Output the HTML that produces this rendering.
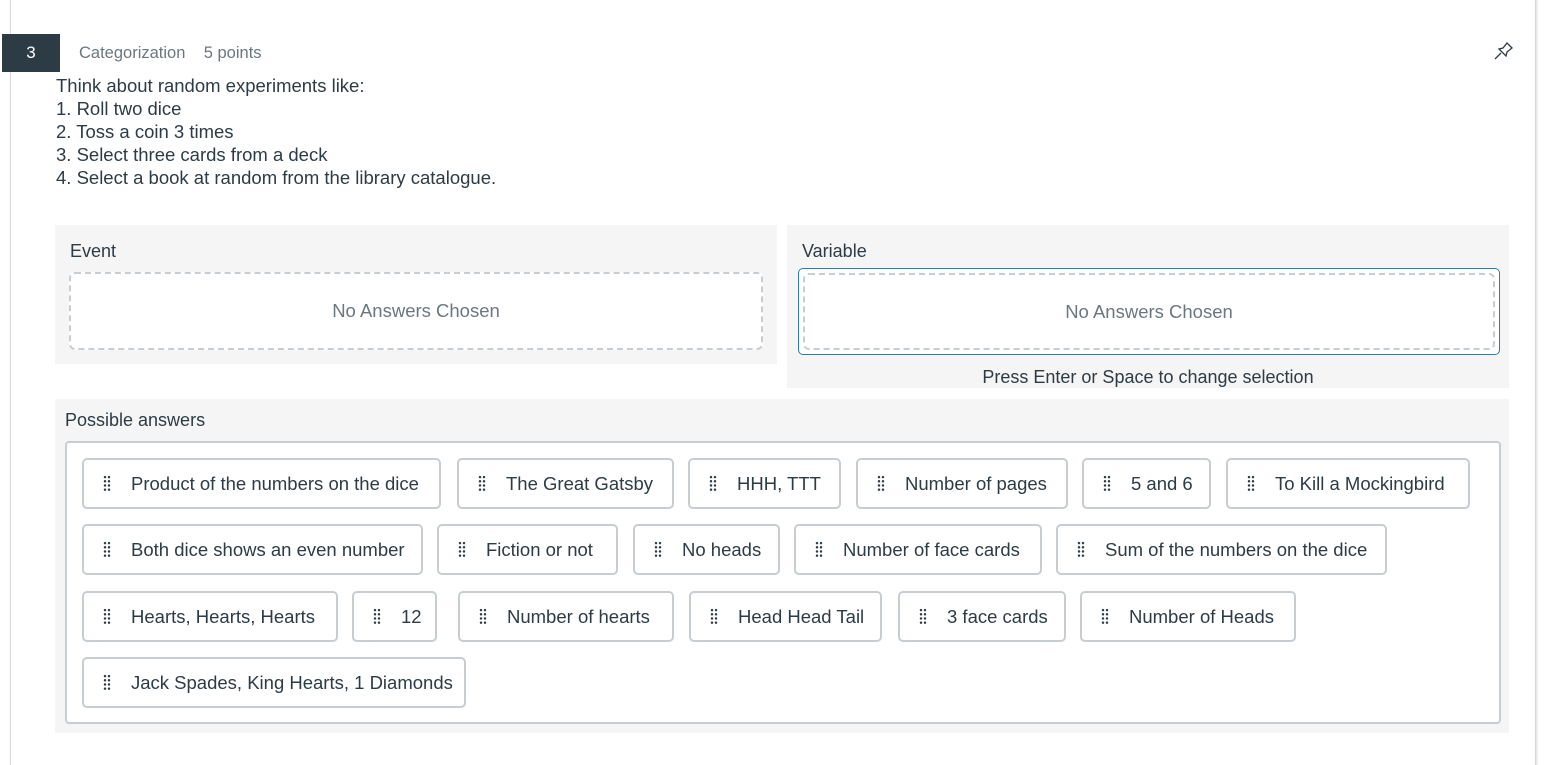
<!DOCTYPE html>
<html><head><style>
*{box-sizing:border-box;margin:0;padding:0}
html,body{width:1561px;height:765px;overflow:hidden}
body{background:#fff;font-family:"Liberation Sans",sans-serif;color:#2d3b45;position:relative}
.card{position:absolute;left:10px;top:-5px;width:1526px;height:800px;border:1px solid #d5d9dc;border-radius:6px;box-shadow:1px 0 2px #ddd}
.badge{position:absolute;left:2px;top:34px;width:58px;height:38px;background:#2d3b45;color:#fff;font-size:17px;line-height:38px;text-align:center}
.meta{position:absolute;left:79px;top:44px;font-size:16.5px;color:#6b7780}
.q{position:absolute;left:56px;top:74px;font-size:18.5px;line-height:23px;color:#2d3b45}
.panel{position:absolute;background:#f5f5f5}
.lbl{position:absolute;font-size:18px}
.drop{position:absolute;border:2px dashed #c7cdd1;border-radius:6px;background:#fff;color:#6b7780;font-size:18.5px;display:flex;align-items:center;justify-content:center}
.chip{position:absolute;height:51px;border:2px solid #c7cdd1;border-radius:5px;background:#fff;font-size:18.5px;line-height:47px;white-space:nowrap;padding-left:47px}
.chip:before{content:"";position:absolute;left:19px;top:15px;width:8px;height:17px;background-image:radial-gradient(circle,#2d3b45 1.1px,transparent 1.4px);background-size:4px 4.2px;}
</style></head><body>
<div class="card"></div>
<div class="badge">3</div>
<div class="meta">Categorization&nbsp;&nbsp;&nbsp;&nbsp;5 points</div>
<svg style="position:absolute;left:1493px;top:40px" width="22" height="22" viewBox="0 0 22 22" fill="none" stroke="#2d3b45" stroke-width="1.3"><path d="M2 19 L8 13 M6 9 L13 16 L14 12 L19 8 L14 3 L10 8 Z M14 3 L19 8"/></svg>
<div class="q">Think about random experiments like:<br>1. Roll two dice<br>2. Toss a coin 3 times<br>3. Select three cards from a deck<br>4. Select a book at random from the library catalogue.</div>

<div class="panel" style="left:55px;top:225px;width:722px;height:139px"></div>
<div class="lbl" style="left:70px;top:241px">Event</div>
<div class="drop" style="left:69px;top:272px;width:694px;height:78px">No Answers Chosen</div>

<div class="panel" style="left:787px;top:225px;width:722px;height:163px"></div>
<div class="lbl" style="left:802px;top:241px">Variable</div>
<div style="position:absolute;left:798px;top:268px;width:702px;height:87px;border:1px solid #2b7abc;border-radius:5px;background:#fff"></div>
<div class="drop" style="left:803px;top:273px;width:692px;height:77px">No Answers Chosen</div>
<div class="lbl" style="left:787px;width:722px;text-align:center;top:367px">Press Enter or Space to change selection</div>

<div class="panel" style="left:55px;top:399px;width:1454px;height:334px"></div>
<div class="lbl" style="left:65px;top:410px">Possible answers</div>
<div style="position:absolute;left:65px;top:441px;width:1436px;height:283px;border:2px solid #c7cdd1;border-radius:4px;background:#fff"></div>

<div class="chip" style="left:82px;top:458px;width:359px">Product of the numbers on the dice</div>
<div class="chip" style="left:457px;top:458px;width:217px">The Great Gatsby</div>
<div class="chip" style="left:688px;top:458px;width:153px">HHH, TTT</div>
<div class="chip" style="left:856px;top:458px;width:212px">Number of pages</div>
<div class="chip" style="left:1082px;top:458px;width:129px">5 and 6</div>
<div class="chip" style="left:1226px;top:458px;width:244px">To Kill a Mockingbird</div>

<div class="chip" style="left:82px;top:524px;width:341px">Both dice shows an even number</div>
<div class="chip" style="left:437px;top:524px;width:181px">Fiction or not</div>
<div class="chip" style="left:633px;top:524px;width:147px">No heads</div>
<div class="chip" style="left:794px;top:524px;width:248px">Number of face cards</div>
<div class="chip" style="left:1056px;top:524px;width:331px">Sum of the numbers on the dice</div>

<div class="chip" style="left:82px;top:591px;width:256px">Hearts, Hearts, Hearts</div>
<div class="chip" style="left:352px;top:591px;width:85px">12</div>
<div class="chip" style="left:458px;top:591px;width:216px">Number of hearts</div>
<div class="chip" style="left:689px;top:591px;width:193px">Head Head Tail</div>
<div class="chip" style="left:898px;top:591px;width:168px">3 face cards</div>
<div class="chip" style="left:1080px;top:591px;width:216px">Number of Heads</div>

<div class="chip" style="left:82px;top:657px;width:384px">Jack Spades, King Hearts, 1 Diamonds</div>
</body></html>
